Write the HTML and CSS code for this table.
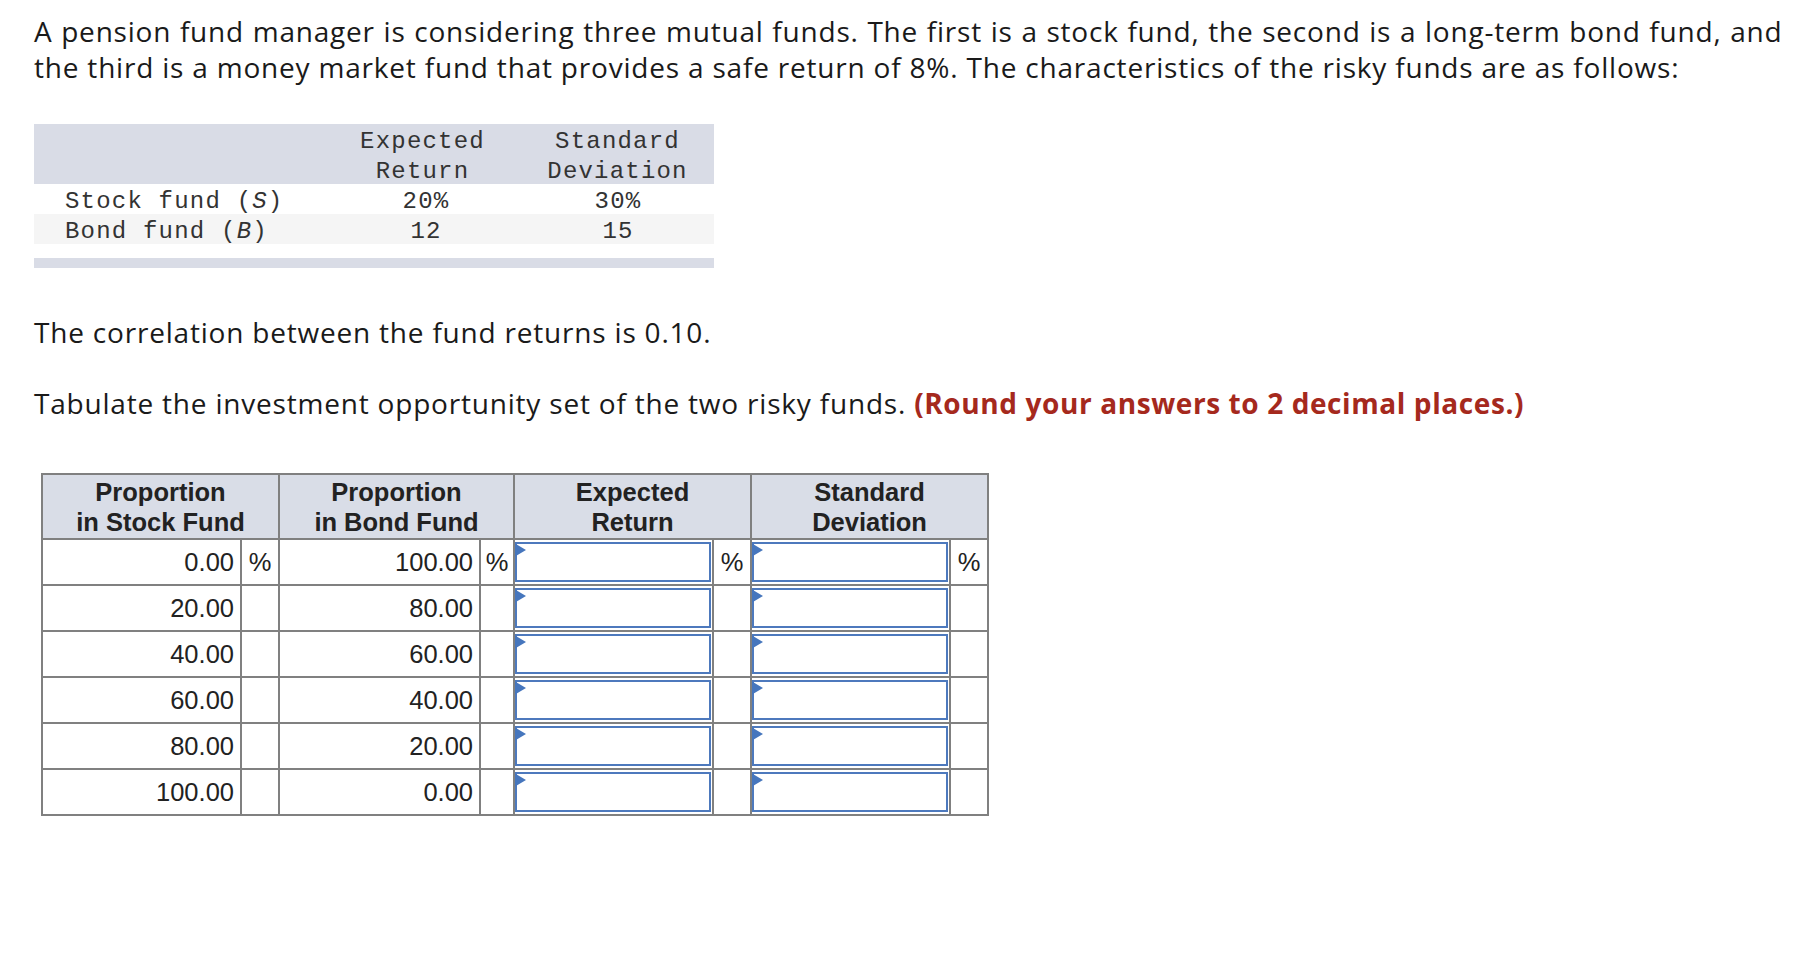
FILE: index.html
```html
<!DOCTYPE html>
<html lang="en">
<head>
<meta charset="utf-8">
<title>Investment opportunity set</title>
<link rel="stylesheet" href="styles.css">
</head>
<body>
<div class="page">
  <p class="text intro"><span class="l1">A pension fund manager is considering three mutual funds. The first is a stock fund, the second is a long-term bond fund, and</span><br>the third is a money market fund that provides a safe return of 8%. The characteristics of the risky funds are as follows:</p>

  <table class="fund-table">
    <colgroup>
      <col class="fc-label"><col class="fc-ret"><col class="fc-sd">
    </colgroup>
    <thead>
      <tr><th></th><th class="h-ret"><div class="hd">Expected<br>Return</div></th><th class="h-sd"><div class="hd">Standard<br>Deviation</div></th></tr>
    </thead>
    <tbody>
      <tr><td class="label">Stock fund (<i>S</i>)</td><td class="num">20%</td><td class="num">30%</td></tr>
      <tr class="alt"><td class="label">Bond fund (<i>B</i>)</td><td class="num">12</td><td class="num">15</td></tr>
    </tbody>
  </table>
  <div class="fund-rule"></div>

  <p class="text corr">The correlation between the fund returns is 0.10.</p>
  <p class="text task">Tabulate the investment opportunity set of the two risky funds. <strong class="hint">(Round your answers to 2 decimal places.)</strong></p>

  <table class="answers">
    <colgroup>
      <col class="c-val"><col class="c-pct"><col class="c-val2"><col class="c-pct2">
      <col class="c-in"><col class="c-pct"><col class="c-in"><col class="c-pct">
    </colgroup>
    <thead>
      <tr>
        <th colspan="2">Proportion<br>in Stock Fund</th>
        <th colspan="2">Proportion<br>in Bond Fund</th>
        <th colspan="2">Expected<br>Return</th>
        <th colspan="2">Standard<br>Deviation</th>
      </tr>
    </thead>
    <tbody>
      <tr>
        <td class="val">0.00</td><td class="pct">%</td>
        <td class="val">100.00</td><td class="pct">%</td>
        <td class="in"><div class="box"><input type="text" aria-label="Expected return 1"><svg class="flag" viewBox="0 0 10 12"><path d="M0 0L10 6L0 12Z"/></svg></div></td><td class="pct">%</td>
        <td class="in"><div class="box"><input type="text" aria-label="Standard deviation 1"><svg class="flag" viewBox="0 0 10 12"><path d="M0 0L10 6L0 12Z"/></svg></div></td><td class="pct">%</td>
      </tr>
      <tr>
        <td class="val">20.00</td><td class="pct"></td>
        <td class="val">80.00</td><td class="pct"></td>
        <td class="in"><div class="box"><input type="text" aria-label="Expected return 2"><svg class="flag" viewBox="0 0 10 12"><path d="M0 0L10 6L0 12Z"/></svg></div></td><td class="pct"></td>
        <td class="in"><div class="box"><input type="text" aria-label="Standard deviation 2"><svg class="flag" viewBox="0 0 10 12"><path d="M0 0L10 6L0 12Z"/></svg></div></td><td class="pct"></td>
      </tr>
      <tr>
        <td class="val">40.00</td><td class="pct"></td>
        <td class="val">60.00</td><td class="pct"></td>
        <td class="in"><div class="box"><input type="text" aria-label="Expected return 3"><svg class="flag" viewBox="0 0 10 12"><path d="M0 0L10 6L0 12Z"/></svg></div></td><td class="pct"></td>
        <td class="in"><div class="box"><input type="text" aria-label="Standard deviation 3"><svg class="flag" viewBox="0 0 10 12"><path d="M0 0L10 6L0 12Z"/></svg></div></td><td class="pct"></td>
      </tr>
      <tr>
        <td class="val">60.00</td><td class="pct"></td>
        <td class="val">40.00</td><td class="pct"></td>
        <td class="in"><div class="box"><input type="text" aria-label="Expected return 4"><svg class="flag" viewBox="0 0 10 12"><path d="M0 0L10 6L0 12Z"/></svg></div></td><td class="pct"></td>
        <td class="in"><div class="box"><input type="text" aria-label="Standard deviation 4"><svg class="flag" viewBox="0 0 10 12"><path d="M0 0L10 6L0 12Z"/></svg></div></td><td class="pct"></td>
      </tr>
      <tr>
        <td class="val">80.00</td><td class="pct"></td>
        <td class="val">20.00</td><td class="pct"></td>
        <td class="in"><div class="box"><input type="text" aria-label="Expected return 5"><svg class="flag" viewBox="0 0 10 12"><path d="M0 0L10 6L0 12Z"/></svg></div></td><td class="pct"></td>
        <td class="in"><div class="box"><input type="text" aria-label="Standard deviation 5"><svg class="flag" viewBox="0 0 10 12"><path d="M0 0L10 6L0 12Z"/></svg></div></td><td class="pct"></td>
      </tr>
      <tr>
        <td class="val">100.00</td><td class="pct"></td>
        <td class="val">0.00</td><td class="pct"></td>
        <td class="in"><div class="box"><input type="text" aria-label="Expected return 6"><svg class="flag" viewBox="0 0 10 12"><path d="M0 0L10 6L0 12Z"/></svg></div></td><td class="pct"></td>
        <td class="in"><div class="box"><input type="text" aria-label="Standard deviation 6"><svg class="flag" viewBox="0 0 10 12"><path d="M0 0L10 6L0 12Z"/></svg></div></td><td class="pct"></td>
      </tr>
    </tbody>
  </table>
</div>
</body>
</html>
```

FILE: styles.css
```css
html, body {
  margin: 0;
  padding: 0;
  background: #ffffff;
}

body {
  color: #1a1a1a;
  font-family: "Open Sans", Lato, "Liberation Sans", sans-serif;
}

.page {
  padding: 13px 0 0 34px;
}

.text {
  margin: 0;
  font-size: 28px;
  line-height: 36px;
  letter-spacing: 0.8px;
}

.intro .l1 {
  word-spacing: 0.6px;
}

.fund-table {
  margin-top: 39px;
  width: 680px;
  border-collapse: collapse;
  table-layout: fixed;
  font-family: "Liberation Mono", monospace;
  font-size: 24px;
  letter-spacing: 1.2px;
  color: #333333;
}

.fc-label { width: 296px; }
.fc-ret { width: 182px; }
.fc-sd { width: 202px; }

.fund-table th {
  background: #d9dce6;
  font-weight: normal;
  height: 60px;
  padding: 0;
  text-align: center;
  vertical-align: top;
}

.fund-table th.h-ret {
  padding-left: 3px;
}

.fund-table th.h-sd {
  padding-left: 9px;
}

.fund-table .hd {
  line-height: 30px;
  margin: 3px 0 -3px;
}

.fund-table td {
  line-height: 24px;
  height: 24px;
  padding: 6px 0 0;
  text-align: center;
  white-space: nowrap;
}

.fund-table td.num {
  padding-left: 10px;
}

.fund-table td.label {
  text-align: left;
  padding-left: 31px;
}

.fund-table tr.alt td {
  background: #f5f5f5;
}

.fund-rule {
  width: 680px;
  height: 10px;
  margin-top: 14px;
  background: #d9dce6;
}

.corr {
  margin-top: 46px;
}

.task {
  margin-top: 35px;
}

.hint {
  color: #a5291d;
  font-weight: bold;
  letter-spacing: 0.6px;
}

.answers {
  margin: 52px 0 0 7px;
  width: 948px;
  border-collapse: collapse;
  table-layout: fixed;
  font-family: "Liberation Sans", Arial, sans-serif;
  font-size: 25.5px;
  color: #222222;
}

.c-val { width: 199px; }
.c-pct { width: 38px; }
.c-val2 { width: 201px; }
.c-pct2 { width: 34px; }
.c-in { width: 199px; }

.answers th {
  background: #d9dde7;
  border: 2px solid #808080;
  font-weight: bold;
  line-height: 30px;
  height: 63px;
  padding: 0;
  text-align: center;
  color: #222222;
}

.answers td {
  border: 2px solid #808080;
  height: 42px;
  padding: 0;
  line-height: 30px;
}

.answers td.val {
  text-align: right;
  padding-right: 6px;
}

.answers td.pct {
  text-align: center;
}

.answers td.in {
  padding: 1px 1px 1px 0;
}

.box {
  position: relative;
  height: 40px;
  box-sizing: border-box;
  border: 2px solid #4d79bd;
  background: #ffffff;
}

.box input {
  display: block;
  width: 100%;
  height: 100%;
  box-sizing: border-box;
  border: 0;
  margin: 0;
  padding: 0 6px;
  background: transparent;
  font: inherit;
  outline: none;
}

.flag {
  position: absolute;
  z-index: 1;
  top: -1px;
  left: -2px;
  width: 11px;
  height: 14px;
  fill: #4676bd;
}
```
